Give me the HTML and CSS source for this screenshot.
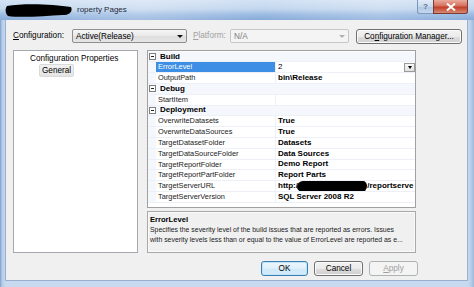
FILE: index.html
```html
<!DOCTYPE html>
<html lang="en">
<head>
  <meta charset="UTF-8">
  <title>Property Pages</title>
  <link rel="stylesheet" href="styles.css">
</head>
<body>
  <div class="window">
    <div class="titlebar">
      <svg class="redact" width="67" height="15" viewBox="0 0 67 15">
        <path d="M2 3 C 18 0, 48 1, 66 4 C 68 8, 65 12, 58 12 C 40 13, 16 15, 3 13 C 0 10, 0 6, 2 3 Z" fill="#000"/>
      </svg>
      <span class="title">roperty Pages</span>
      <div class="caption">
        <span class="cap help">?</span>
        <span class="cap close">
          <svg width="10" height="8" viewBox="0 0 10 8"><path d="M1 0.5 L9 7.5 M9 0.5 L1 7.5" stroke="#fff" stroke-width="2"/></svg>
        </span>
      </div>
    </div>

    <div class="client">
      <div class="config-row">
        <span class="lbl lbl-config"><u>C</u>onfiguration:</span>
        <div class="combo combo-config">
          <span>Active(Release)</span>
          <span class="arrow"></span>
        </div>
        <span class="lbl lbl-platform disabled"><u>P</u>latform:</span>
        <div class="combo combo-platform disabled">
          <span>N/A</span>
          <span class="arrow"></span>
        </div>
        <button class="btn btn-manager">Co<u>n</u>figuration Manager...</button>
      </div>

      <div class="main">
        <div class="tree">
          <div class="tree-root">Configuration Properties</div>
          <div class="tree-child"><span class="tree-sel">General</span></div>
        </div>

        <div class="right">
          <div class="grid">
            <div class="pg-row cat"><span class="expander"></span>Build</div>
            <div class="pg-row">
              <span class="pg-gutter"></span>
              <span class="pg-name selected">ErrorLevel</span>
              <span class="pg-value plain">2<span class="drop-btn"></span></span>
            </div>
            <div class="pg-row">
              <span class="pg-gutter"></span>
              <span class="pg-name">OutputPath</span>
              <span class="pg-value">bin\Release</span>
            </div>
            <div class="pg-row cat"><span class="expander"></span>Debug</div>
            <div class="pg-row">
              <span class="pg-gutter"></span>
              <span class="pg-name">StartItem</span>
              <span class="pg-value"></span>
            </div>
            <div class="pg-row cat"><span class="expander"></span>Deployment</div>
            <div class="pg-row">
              <span class="pg-gutter"></span>
              <span class="pg-name">OverwriteDatasets</span>
              <span class="pg-value">True</span>
            </div>
            <div class="pg-row">
              <span class="pg-gutter"></span>
              <span class="pg-name">OverwriteDataSources</span>
              <span class="pg-value">True</span>
            </div>
            <div class="pg-row">
              <span class="pg-gutter"></span>
              <span class="pg-name">TargetDatasetFolder</span>
              <span class="pg-value">Datasets</span>
            </div>
            <div class="pg-row">
              <span class="pg-gutter"></span>
              <span class="pg-name">TargetDataSourceFolder</span>
              <span class="pg-value">Data Sources</span>
            </div>
            <div class="pg-row">
              <span class="pg-gutter"></span>
              <span class="pg-name">TargetReportFolder</span>
              <span class="pg-value">Demo Report</span>
            </div>
            <div class="pg-row">
              <span class="pg-gutter"></span>
              <span class="pg-name">TargetReportPartFolder</span>
              <span class="pg-value">Report Parts</span>
            </div>
            <div class="pg-row">
              <span class="pg-gutter"></span>
              <span class="pg-name">TargetServerURL</span>
              <span class="pg-value">http://<span class="url-redact"></span>/reportserve</span>
            </div>
            <div class="pg-row">
              <span class="pg-gutter"></span>
              <span class="pg-name">TargetServerVersion</span>
              <span class="pg-value">SQL Server 2008 R2</span>
            </div>
          </div>

          <div class="desc">
            <div class="desc-title">ErrorLevel</div>
            <div class="desc-text">Specifies the severity level of the build issues that are reported as errors. Issues<br>with severity levels less than or equal to the value of ErrorLevel are reported as e...</div>
          </div>
        </div>
      </div>

      <div class="buttons">
        <button class="btn btn-ok">OK</button>
        <button class="btn btn-cancel">Cancel</button>
        <button class="btn btn-apply" disabled><u>A</u>pply</button>
      </div>
    </div>
  </div>
</body>
</html>
```

FILE: styles.css
```css
body {
  margin: 0;
  width: 474px;
  height: 287px;
  overflow: hidden;
  font-family: 'Liberation Sans', Arial, sans-serif;
  font-size: 8.2px;
  color: #000;
  background: #bcd2ec;
}
.window {
  height: 287px;
  display: flex;
  flex-direction: column;
  background: linear-gradient(90deg, #7e9fcc 0, #b4cbe8 2px, #c6d9ef 5px, #c6d9ef 468px, #b7cde9 471px, #9db8dd 474px);
}
.titlebar {
  height: 20px;
  flex: none;
  display: flex;
  align-items: flex-start;
  padding-right: 6px;
  background:
    linear-gradient(100deg, rgba(255,255,255,0) 0, rgba(255,255,255,0.25) 30%, rgba(255,255,255,0) 55%, rgba(255,255,255,0.2) 80%, rgba(255,255,255,0) 100%),
    linear-gradient(#d3e2f4 0, #c2d6ee 45%, #9ebde3 70%, #87aad9 100%);
}
.redact {
  margin: 3px 0 0 5px;
  flex: none;
}
.title {
  margin-left: 5px;
  line-height: 20px;
  font-size: 8px;
  color: #1e2a3a;
}
.caption {
  margin-left: auto;
  display: flex;
}
.cap {
  height: 14px;
  display: flex;
  align-items: center;
  justify-content: center;
  box-sizing: border-box;
}
.help {
  width: 16px;
  border: 1px solid #7d97bd;
  border-top: none;
  border-right: none;
  border-radius: 0 0 0 3px;
  background: linear-gradient(#e2ecf7, #c8d9ee 50%, #aec6e4 51%, #c4d8ef);
  color: #5a6e8a;
  font-weight: bold;
  font-size: 8px;
}
.close {
  width: 35px;
  border: 1px solid #7a3b36;
  border-top: none;
  border-radius: 0 0 3px 0;
  background: linear-gradient(#e9ab9d, #d7705d 45%, #c13f2a 55%, #d98a72);
}

.client {
  margin: 0 6px 0 5px;
  height: 261px;
  box-sizing: border-box;
  background: #f0f0f0;
  border: 1px solid #98afcf;
  border-top: none;
  padding: 9px 5px 0 7px;
  display: flex;
  flex-direction: column;
}
.config-row {
  display: flex;
  align-items: flex-start;
  height: 15px;
}
.lbl {
  line-height: 14px;
  white-space: nowrap;
}
.lbl-config {
  width: 59px;
}
.lbl-platform {
  width: 37px;
  margin-left: 6px;
}
.disabled {
  color: #a0a0a0;
}
.combo {
  height: 14px;
  box-sizing: border-box;
  border: 1px solid #8e8f8f;
  border-radius: 2px;
  background: linear-gradient(#f6f6f6, #e9e9e9 50%, #dedede 51%, #e5e5e5);
  display: flex;
  align-items: center;
  justify-content: space-between;
  padding: 0 3px 0 3px;
}
.combo-config {
  width: 115px;
}
.combo-platform {
  width: 119px;
  border-color: #c6c6c6;
  background: #f4f4f4;
  color: #7a7a7a;
}
.arrow {
  width: 0;
  height: 0;
  border-left: 3px solid transparent;
  border-right: 3px solid transparent;
  border-top: 3px solid #111;
}
.combo-platform .arrow {
  border-top-color: #b0b0b0;
}
.btn {
  font-family: inherit;
  font-size: 8.2px;
  height: 15px;
  padding: 0;
  box-sizing: border-box;
  border: 1px solid #707070;
  border-radius: 3px;
  background: linear-gradient(#f2f2f2 0, #ebebeb 50%, #dddddd 51%, #cfcfcf 100%);
  box-shadow: inset 0 0 0 1px #fbfbfb;
  color: #000;
}
.btn-manager {
  width: 106px;
  margin-left: 7px;
}

.main {
  margin-top: 6px;
  display: flex;
  gap: 9px;
  height: 203px;
}
.tree {
  width: 125px;
  height: 203px;
  box-sizing: border-box;
  border: 1px solid #a5a8ae;
  background: #fff;
  padding-top: 2px;
}
.tree-root {
  padding-left: 16px;
  line-height: 11px;
  white-space: nowrap;
}
.tree-child {
  padding-left: 25px;
  line-height: 11px;
}
.tree-sel {
  display: inline-block;
  padding: 0 2px;
  border: 1px solid #dadada;
  border-radius: 2px;
  background: linear-gradient(#f2f2f2, #e4e4e4);
}
.right {
  width: 269px;
  display: flex;
  flex-direction: column;
}
.grid {
  height: 158px;
  box-sizing: border-box;
  border: 1px solid #a0a0a0;
  background: #fff;
  padding-top: 0.6px;
}
.pg-row {
  display: flex;
  height: 10.8px;
  line-height: 10px;
  box-sizing: border-box;
  border-bottom: 1px solid #edf1f7;
}
.pg-row.cat {
  background: #f4f7fc;
  font-weight: bold;
  font-size: 8px;
  align-items: center;
  line-height: 10px;
}
.expander {
  width: 7px;
  height: 7px;
  box-sizing: border-box;
  border: 1px solid #7f7f7f;
  background: #fff;
  margin: 0 4px 0 1px;
  display: flex;
  align-items: center;
  justify-content: center;
}
.expander::before {
  content: '';
  width: 3px;
  height: 1px;
  background: #222;
}
.pg-gutter {
  width: 8px;
  flex: none;
  background: #f4f7fc;
}
.pg-name {
  width: 119px;
  flex: none;
  box-sizing: border-box;
  padding-left: 2px;
  font-size: 7.4px;
  color: #222;
  white-space: nowrap;
  overflow: hidden;
}
.pg-name.selected {
  background: #3d8ee5;
  color: #fff;
}
.pg-value {
  flex: 1;
  border-left: 1px solid #edf1f7;
  padding-left: 2px;
  font-weight: bold;
  font-size: 8px;
  white-space: nowrap;
  overflow: hidden;
  display: flex;
  align-items: center;
}
.pg-value.plain {
  font-weight: normal;
  justify-content: space-between;
}
.drop-btn {
  width: 11px;
  height: 9px;
  box-sizing: border-box;
  border: 1px solid #9a9a9a;
  background: linear-gradient(#f7f7f7, #e1e1e1);
  display: flex;
  align-items: center;
  justify-content: center;
}
.drop-btn::before {
  content: '';
  border-left: 2.5px solid transparent;
  border-right: 2.5px solid transparent;
  border-top: 3px solid #000;
}
.url-redact {
  display: inline-block;
  flex: none;
  width: 70px;
  height: 11px;
  margin-left: -3px;
  background: #000;
  border-radius: 6px 4px 5px 6px / 6px 5px 6px 5px;
}
.desc {
  margin-top: 3px;
  height: 42px;
  box-sizing: border-box;
  border: 1px solid #a9a9a9;
  box-shadow: inset 0 0 0 1px #fafafa;
  background: #f0f0f0;
  padding: 3px 2px;
  line-height: 10px;
  white-space: nowrap;
  overflow: hidden;
}
.desc-title {
  font-weight: bold;
  font-size: 7.6px;
}
.desc-text {
  font-size: 6.9px;
  line-height: 9.5px;
  color: #222;
}

.buttons {
  margin: 8px 44px 0 0;
  display: flex;
  justify-content: flex-end;
  gap: 6px;
}
.btn-ok {
  width: 47px;
  border-color: #3c7fb1;
  background: linear-gradient(#eef7fd 0, #dff0fb 50%, #cde8f8 51%, #d6ecf9 100%);
  box-shadow: inset 0 0 0 1px #bfe3f8;
}
.btn-cancel {
  width: 49px;
}
.btn-apply {
  width: 49px;
  border-color: #adb2b5;
  background: #f4f4f4;
  box-shadow: none;
  color: #a0a0a0;
}
```
